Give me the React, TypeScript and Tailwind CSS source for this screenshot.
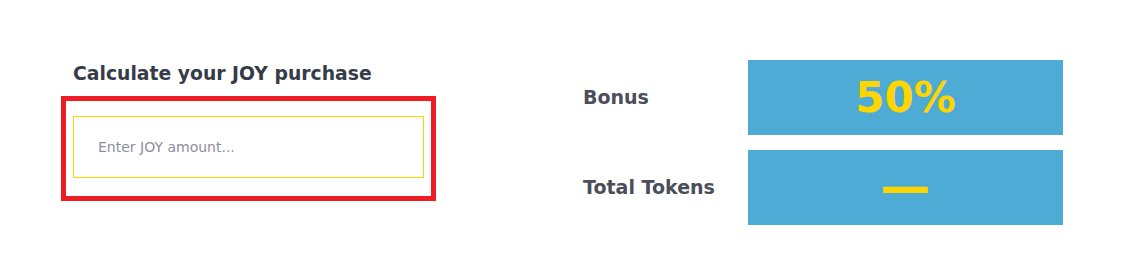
import React from "react";

export default function App() {
  const font = { fontFamily: '"DejaVu Sans", "Liberation Sans", sans-serif' };
  return (
    <div className="w-[1134px] h-[280px] bg-white flex" style={font}>
      <div className="ml-[61px] mt-[59px] w-[375px] flex flex-col">
        <h2 className="ml-[12px] text-[18.8px] leading-[30px] font-bold text-[#363b49] mb-[7px]">
          Calculate your JOY purchase
        </h2>
        <div className="border-[5px] border-solid border-[#ee1c25] pt-[15px] pb-[18px] pl-[7px] pr-[7px]">
          <div className="w-[351px] h-[62px] border border-solid border-[#ffd500] bg-white flex items-center">
            <input
              type="text"
              placeholder="Enter JOY amount..."
              style={font}
              className="block w-full h-full appearance-none bg-transparent border-0 pl-[24px] text-[14px] font-normal outline-none placeholder:text-[#8c90a0] text-[#3b3f4c]"
            />
          </div>
        </div>
      </div>
      <div className="ml-[147px] mt-[60px] flex flex-col gap-[15px]">
        <div className="flex items-center">
          <div className="w-[165px] text-[19px] font-bold text-[#4a4e59]">Bonus</div>
          <div className="w-[315px] h-[75px] bg-[#4dabd5] flex items-center justify-center text-[42px] font-bold text-[#ffd500]">
            50%
          </div>
        </div>
        <div className="flex items-center">
          <div className="w-[165px] text-[19px] font-bold text-[#4a4e59]">Total Tokens</div>
          <div className="w-[315px] h-[75px] bg-[#4dabd5] flex items-center justify-center text-[50px] font-bold text-[#ffd500]">
            —
          </div>
        </div>
      </div>
    </div>
  );
}
